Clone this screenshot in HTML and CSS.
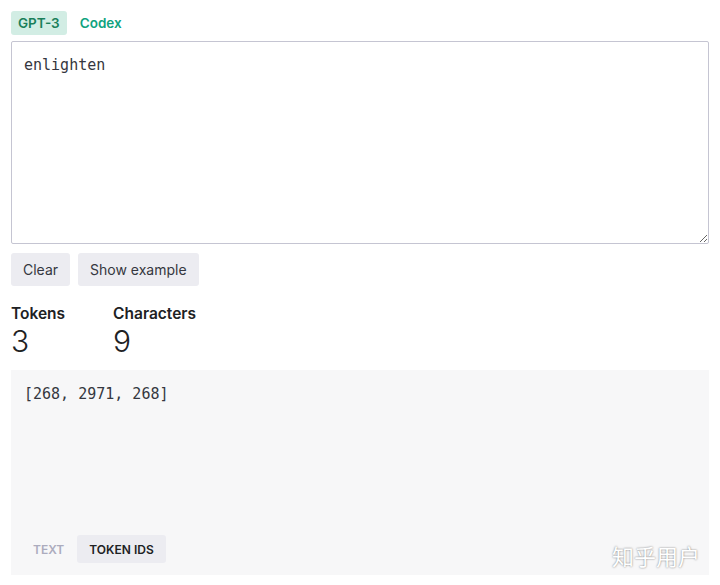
FILE: index.html
```html
<!DOCTYPE html>
<html lang="en">
<head>
  <meta charset="UTF-8">
  <title>Tokenizer</title>
  <link rel="stylesheet" href="styles.css">
</head>
<body>

<div class="tokenizer">
  <div class="model-tabs">
    <button class="model-tab active">GPT-3</button>
    <button class="model-tab">Codex</button>
  </div>

  <textarea class="input-box" spellcheck="false">enlighten</textarea>

  <div class="actions">
    <button class="btn">Clear</button>
    <button class="btn">Show example</button>
  </div>

  <div class="stats">
    <div class="stat">
      <div class="stat-label">Tokens</div>
      <div class="stat-value">3</div>
    </div>
    <div class="stat">
      <div class="stat-label">Characters</div>
      <div class="stat-value">9</div>
    </div>
  </div>

  <div class="output">
    <div class="output-text">[268, 2971, 268]</div>
    <div class="view-tabs">
      <button class="view-tab">TEXT</button>
      <button class="view-tab active">TOKEN IDS</button>
    </div>
    <div class="watermark">知乎用户</div>
  </div>
</div>

</body>
</html>
```

FILE: styles.css
```css
body {
  margin: 0;
  padding: 11px;
  font-family: Inter, 'Noto Sans', sans-serif;
  color: #202123;
  background-color: #fff;
}

button {
  font-family: inherit;
  border: none;
  cursor: pointer;
}

.model-tabs {
  display: flex;
  gap: 6px;
  height: 24px;
}

.model-tab {
  background: none;
  color: #10a37f;
  font-size: 13.5px;
  font-weight: 600;
  padding: 0 7px;
  border-radius: 3px;
}

.model-tab.active {
  background-color: #d2ede4;
  color: #1a7f5a;
}

.input-box {
  display: block;
  box-sizing: border-box;
  width: 100%;
  height: 203px;
  margin-top: 6px;
  padding: 14px 12px;
  border: 1px solid #c5c5d2;
  border-radius: 2px;
  font-family: 'DejaVu Sans Mono', monospace;
  font-size: 15px;
  color: #353740;
  resize: vertical;
  outline: none;
}

.actions {
  display: flex;
  gap: 8px;
  margin-top: 9px;
}

.btn {
  height: 33px;
  padding: 0 12px;
  background-color: #ececf1;
  color: #353740;
  font-size: 14px;
  border-radius: 3px;
}

.stats {
  display: flex;
  gap: 48px;
  margin-top: 18px;
}

.stat-label {
  font-size: 15.5px;
  font-weight: 600;
  color: #202123;
}

.stat-value {
  font-size: 30px;
  font-weight: 300;
  line-height: 36px;
  color: #202123;
}

.output {
  position: relative;
  box-sizing: border-box;
  height: 205px;
  margin-top: 11px;
  padding: 15px 13px 12px;
  background-color: #f7f7f8;
  display: flex;
  flex-direction: column;
  justify-content: space-between;
}

.output-text {
  font-family: 'DejaVu Sans Mono', monospace;
  font-size: 15px;
  color: #353740;
}

.view-tabs {
  display: flex;
  gap: 4px;
}

.view-tab {
  height: 28px;
  padding: 0 9px;
  background: none;
  color: #acacbe;
  font-size: 12px;
  font-weight: 600;
  border-radius: 3px;
}

.view-tab.active {
  padding: 0 12px;
  background-color: #ececf1;
  color: #202123;
}

.watermark {
  position: absolute;
  right: 9px;
  bottom: 4px;
  font-family: 'Noto Sans CJK SC', sans-serif;
  font-size: 22px;
  color: #fff;
  text-shadow: 0 0 2px rgba(0, 0, 0, 0.55);
}
```
